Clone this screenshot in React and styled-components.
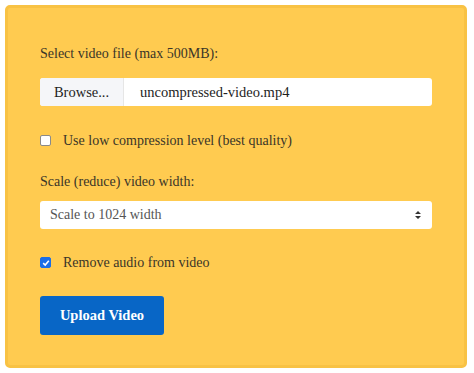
import React from 'react';
import styled, { createGlobalStyle } from 'styled-components';

const Global = createGlobalStyle`
  html, body { margin: 0; padding: 0; background: #ffffff; }
  body { font-family: "Liberation Serif", "DejaVu Serif", serif; }
`;

const Panel = styled.form`
  box-sizing: border-box;
  width: 462px;
  height: 363px;
  margin: 5px 0 0 5px;
  padding: 35px 32px 0 32px;
  background: #ffcb50;
  border: 3px solid #f8c244;
  border-radius: 5px;
  display: flex;
  flex-direction: column;
  color: #3a3528;
`;

const Label = styled.div`
  font-size: 14px;
  line-height: 21px;
  margin-bottom: ${({ $gap }) => $gap}px;
`;

const FileInput = styled.div`
  display: flex;
  height: 28px;
  background: #ffffff;
  border-radius: 3px;
  overflow: hidden;
  margin-bottom: 24px;
`;

const Browse = styled.div`
  width: 83px;
  display: flex;
  align-items: center;
  justify-content: center;
  background: #f5f6f9;
  border-right: 1px solid #e6e6e6;
  font-size: 14.5px;
  color: #1e1e1e;
`;

const FileName = styled.div`
  display: flex;
  align-items: center;
  padding-left: 16px;
  font-size: 14.5px;
  color: #1e1e1e;
`;

const CheckRow = styled.label`
  display: flex;
  align-items: center;
  gap: 12px;
  font-size: 14px;
  line-height: 21px;
  margin-bottom: ${({ $gap }) => $gap}px;
`;

const Box = styled.span`
  box-sizing: border-box;
  width: 11px;
  height: 11px;
  border-radius: 2px;
  display: flex;
  align-items: center;
  justify-content: center;
  background: ${({ $checked }) => ($checked ? '#1a6ee8' : '#ffffff')};
  border: 1px solid ${({ $checked }) => ($checked ? '#1a6ee8' : '#8a8a8a')};
`;

const Select = styled.div`
  display: flex;
  align-items: center;
  justify-content: space-between;
  height: 28px;
  background: #ffffff;
  border-radius: 3px;
  padding: 0 10px;
  font-size: 14px;
  color: #555555;
  margin-bottom: 23px;
`;

const Button = styled.button`
  width: 124px;
  height: 39px;
  margin-top: 2px;
  background: #0866c6;
  color: #ffffff;
  border: none;
  border-radius: 3px;
  font-family: inherit;
  font-size: 14.5px;
  font-weight: bold;
`;

const Check = () => (
  <svg width="8" height="8" viewBox="0 0 8 8">
    <path d="M1.2 4.2 L3.2 6 L6.8 1.8" stroke="#fff" strokeWidth="1.6" fill="none" />
  </svg>
);

const Arrows = () => (
  <svg width="8" height="10" viewBox="0 0 8 10">
    <path d="M1 4 L4 1 L7 4 Z M1 6 L4 9 L7 6 Z" fill="#333" />
  </svg>
);

export default function App() {
  return (
    <>
      <Global />
      <Panel>
        <Label $gap={14}>Select video file (max 500MB):</Label>
        <FileInput>
          <Browse>Browse...</Browse>
          <FileName>uncompressed-video.mp4</FileName>
        </FileInput>
        <CheckRow $gap={20}>
          <Box />
          Use low compression level (best quality)
        </CheckRow>
        <Label $gap={9}>Scale (reduce) video width:</Label>
        <Select>
          Scale to 1024 width
          <Arrows />
        </Select>
        <CheckRow $gap={21}>
          <Box $checked>
            <Check />
          </Box>
          Remove audio from video
        </CheckRow>
        <Button type="button">Upload Video</Button>
      </Panel>
    </>
  );
}
